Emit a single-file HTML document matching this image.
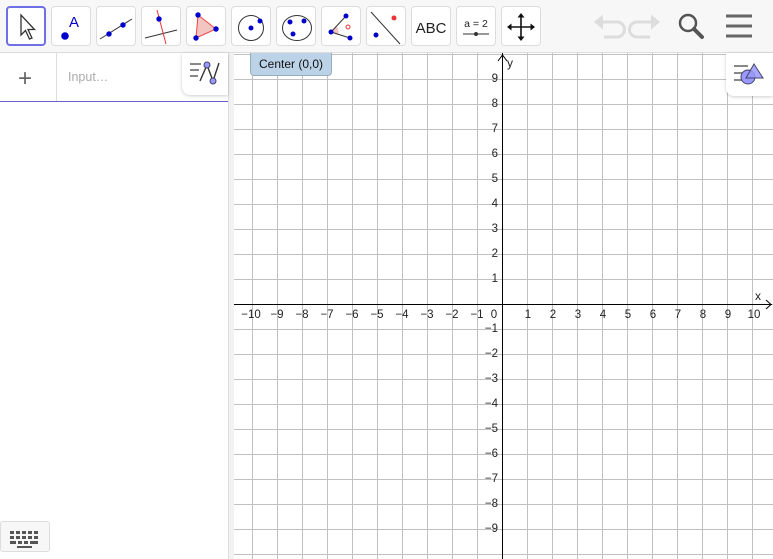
<!DOCTYPE html>
<html><head><meta charset="utf-8"><style>
*{margin:0;padding:0;box-sizing:border-box}
body{width:773px;height:559px;overflow:hidden;background:#fff;font-family:"Liberation Sans",sans-serif;position:relative}
#tb{position:absolute;left:0;top:0;width:773px;height:53px;background:#f7f7f7;border-bottom:1px solid #ddd}
.b{position:absolute;top:6px;width:40px;height:40px;background:#fff;border:1px solid #dcdcdc;border-radius:4px}
.b svg{position:absolute;left:-1px;top:-1px}
#alg{position:absolute;left:0;top:53px;width:228px;height:506px;background:#fff}
#div{position:absolute;left:228px;top:53px;width:6px;height:506px;background:#f2f2f2;border-left:1px solid #ddd}
</style></head><body>
<div id="tb">
<div class="b" style="left:6px;border:2px solid #6f6fe6"><svg width="36" height="36" style="left:0;top:0"><path d="M13 7 L13 27 L17.5 22.5 L21.5 31 L24 30 L20 21.5 L26.5 21.5 Z" fill="#fff" stroke="#333" stroke-width="1.3"/></svg></div>
<div class="b" style="left:51px"><svg width="40" height="40"><circle cx="14" cy="30" r="3.8" fill="#00c"/><text x="18" y="21" font-size="15" fill="#00c" font-family="Liberation Sans">A</text></svg></div>
<div class="b" style="left:96px"><svg width="40" height="40"><line x1="4" y1="33" x2="36" y2="13" stroke="#333"/><circle cx="13" cy="28" r="2.7" fill="#00c"/><circle cx="27" cy="19" r="2.7" fill="#00c"/></svg></div>
<div class="b" style="left:141px"><svg width="40" height="40"><line x1="4" y1="32" x2="36" y2="24" stroke="#333"/><line x1="16" y1="4" x2="25" y2="38" stroke="#e33"/><circle cx="18" cy="13" r="2.7" fill="#00c"/></svg></div>
<div class="b" style="left:186px"><svg width="40" height="40"><path d="M12 9 L30 23 L10 32 Z" fill="#f3c5c0" stroke="#e44"/><circle cx="12" cy="9" r="2.7" fill="#00c"/><circle cx="30" cy="23" r="2.7" fill="#00c"/><circle cx="10" cy="32" r="2.7" fill="#00c"/></svg></div>
<div class="b" style="left:231px"><svg width="40" height="40"><circle cx="20" cy="22" r="12.5" fill="none" stroke="#333"/><circle cx="20" cy="22" r="2.5" fill="#00c"/><circle cx="29" cy="15" r="2.5" fill="#00c"/></svg></div>
<div class="b" style="left:276px"><svg width="40" height="40"><ellipse cx="21" cy="22" rx="14.5" ry="12.5" fill="none" stroke="#333"/><circle cx="14" cy="16" r="2.5" fill="#00c"/><circle cx="28" cy="15" r="2.5" fill="#00c"/><circle cx="17" cy="28" r="2.5" fill="#00c"/></svg></div>
<div class="b" style="left:321px"><svg width="40" height="40"><path d="M10 26 L17 29 A8 8 0 0 0 15 20 Z" fill="#f3c5c0"/><line x1="10" y1="26" x2="25" y2="10" stroke="#333"/><line x1="10" y1="26" x2="29" y2="32" stroke="#333"/><circle cx="10" cy="26" r="2.5" fill="#00c"/><circle cx="25" cy="10" r="2.5" fill="#00c"/><circle cx="29" cy="32" r="2.5" fill="#00c"/><circle cx="27" cy="21" r="2" fill="none" stroke="#e33"/></svg></div>
<div class="b" style="left:366px"><svg width="40" height="40"><line x1="5" y1="6" x2="34" y2="38" stroke="#333"/><circle cx="10" cy="29" r="2.5" fill="#00c"/><circle cx="28" cy="12" r="2.5" fill="#e33"/></svg></div>
<div class="b" style="left:411px"><svg width="40" height="40"><text x="20" y="27" font-size="15" text-anchor="middle" fill="#222" font-family="Liberation Sans">ABC</text></svg></div>
<div class="b" style="left:456px"><svg width="40" height="40"><text x="20" y="21" font-size="10.5" text-anchor="middle" fill="#222" font-family="Liberation Sans">a = 2</text><line x1="7" y1="28" x2="33" y2="28" stroke="#333"/><circle cx="20" cy="28" r="2" fill="#333"/></svg></div>
<div class="b" style="left:501px"><svg width="40" height="40"><path d="M20 10 V32 M9 21 H31" stroke="#111" stroke-width="1.6"/><path d="M20 7 L16.5 11.5 H23.5Z M20 35 L16.5 30.5 H23.5Z M6 21 L10.5 17.5 V24.5Z M34 21 L29.5 17.5 V24.5Z" fill="#111"/></svg></div>
<svg style="position:absolute;left:590px;top:10px" width="180" height="34">
<path d="M12 12 H27 A7.5 7.5 0 0 1 27 27 H14" fill="none" stroke="#ddd" stroke-width="3"/><path d="M4 12 L13 4.5 V19.5 Z" fill="#ddd"/>
<path d="M62 12 H47 A7.5 7.5 0 0 0 47 27 H60" fill="none" stroke="#ddd" stroke-width="3"/><path d="M70 12 L61 4.5 V19.5 Z" fill="#ddd"/>
<circle cx="98" cy="13" r="8" fill="none" stroke="#555" stroke-width="2.5"/><path d="M104 19 L112 27" stroke="#555" stroke-width="4" stroke-linecap="round"/>
<path d="M136 6 H162 M136 16 H162 M136 26 H162" stroke="#666" stroke-width="3"/>
</svg>
</div>
<div id="alg">
<div style="position:absolute;left:0;top:0;width:57px;height:48px;border-right:1px solid #ddd"></div>
<div style="position:absolute;left:18px;top:12px;font-size:24px;color:#666;font-weight:300">+</div>
<div style="position:absolute;left:68px;top:17px;font-size:12.5px;color:#aaa">Input…</div>
<div style="position:absolute;left:0;top:48px;width:228px;height:1px;background:#6a5fd0"></div>
</div>
<div id="div"></div>
<svg style="position:absolute;left:234px;top:53px" width="539" height="506" font-family="Liberation Sans" font-size="11.5" fill="#222">
<defs><pattern id="g" x="18" y="1" width="25" height="25" patternUnits="userSpaceOnUse"><path d="M0.5 0 V25 M0 0.5 H25" stroke="#c0c0c0" fill="none"/></pattern></defs>
<rect width="539" height="506" fill="url(#g)"/>
<line x1="0" y1="251.5" x2="538" y2="251.5" stroke="#000"/>
<path d="M532 247 L537 251.5 L532 256" fill="none" stroke="#000"/>
<line x1="268.5" y1="0" x2="268.5" y2="506" stroke="#000"/>
<path d="M264 8 L268.5 2 L273 8" fill="none" stroke="#000"/>
<text x="521" y="247" font-size="12">x</text><text x="273" y="14" font-size="12">y</text>
<g text-anchor="middle">
<text x="17" y="265">−10</text><text x="43" y="265">−9</text><text x="68" y="265">−8</text><text x="93" y="265">−7</text><text x="118" y="265">−6</text><text x="143" y="265">−5</text><text x="168" y="265">−4</text><text x="193" y="265">−3</text><text x="218" y="265">−2</text><text x="243" y="265">−1</text><text x="260" y="265">0</text>
<text x="294" y="265">1</text><text x="319" y="265">2</text><text x="344" y="265">3</text><text x="369" y="265">4</text><text x="394" y="265">5</text><text x="419" y="265">6</text><text x="444" y="265">7</text><text x="469" y="265">8</text><text x="494" y="265">9</text><text x="520" y="265">10</text>
</g>
<g text-anchor="end">
<text x="264" y="29">9</text><text x="264" y="54">8</text><text x="264" y="79">7</text><text x="264" y="104">6</text><text x="264" y="129">5</text><text x="264" y="154">4</text><text x="264" y="179">3</text><text x="264" y="204">2</text><text x="264" y="229">1</text>
<text x="264" y="279">−1</text><text x="264" y="304">−2</text><text x="264" y="329">−3</text><text x="264" y="354">−4</text><text x="264" y="379">−5</text><text x="264" y="404">−6</text><text x="264" y="429">−7</text><text x="264" y="454">−8</text><text x="264" y="479">−9</text>
</g>
</svg>
<div style="position:absolute;left:250px;top:53px;width:82px;height:23px;background:#bcd2e6;border:1px solid #98adc2;border-top:none;border-radius:0 0 4px 4px;font-size:12px;color:#111;text-align:center;line-height:22px">Center (0,0)</div>
<div style="position:absolute;left:182px;top:53px;width:46px;height:42px;background:#fff;border-radius:0 0 0 8px;box-shadow:0 1px 3px rgba(0,0,0,.2)"><svg width="46" height="42"><path d="M8 11 H19 M8 17 H17 M8 23 H16" stroke="#888" stroke-width="2"/><path d="M18 28 L25 12 L31 28 L37 10" fill="none" stroke="#333" stroke-width="1.4"/><circle cx="25" cy="12" r="3" fill="#99f" stroke="#446"/><circle cx="31" cy="28" r="3" fill="#99f" stroke="#446"/></svg></div>
<div style="position:absolute;left:726px;top:53px;width:47px;height:43px;background:#fff;border-radius:0 0 0 8px;box-shadow:0 1px 3px rgba(0,0,0,.2)"><svg width="47" height="43"><path d="M8 13 H22 M8 20 H18 M8 27 H18" stroke="#888" stroke-width="2"/><circle cx="22" cy="24" r="7" fill="#99f" stroke="#446"/><path d="M28 11 L37 25 H20 Z" fill="#99f" stroke="#446" fill-opacity=".85"/></svg></div>
<div style="position:absolute;left:0;top:521px;width:50px;height:31px;background:#f7f7f7;border:1px solid #ddd;border-radius:3px"><svg width="50" height="31"><g fill="#555"><rect x="9" y="9" width="4" height="3"/><rect x="15" y="9" width="4" height="3"/><rect x="21" y="9" width="4" height="3"/><rect x="27" y="9" width="4" height="3"/><rect x="33" y="9" width="4" height="3"/><rect x="9" y="14" width="4" height="3"/><rect x="15" y="14" width="4" height="3"/><rect x="21" y="14" width="4" height="3"/><rect x="27" y="14" width="4" height="3"/><rect x="33" y="14" width="4" height="3"/><rect x="9" y="19" width="6" height="3"/><rect x="17" y="19" width="4" height="3"/><rect x="23" y="19" width="4" height="3"/><rect x="29" y="19" width="8" height="3"/><rect x="16" y="24" width="15" height="2"/></g></svg></div>
</body></html>
